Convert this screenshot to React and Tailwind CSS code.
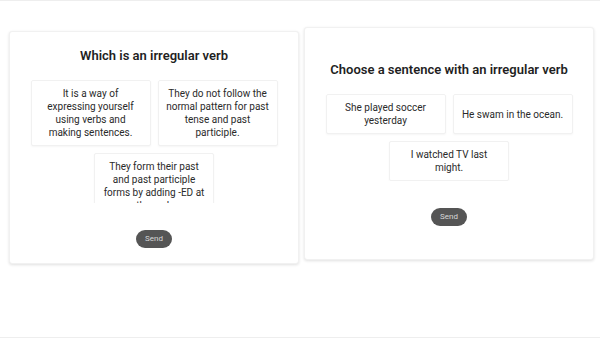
const questions = [
  {
    title: "Which is an irregular verb",
    options: [
      "It is a way of expressing yourself using verbs and making sentences.",
      "They do not follow the normal pattern for past tense and past participle.",
      "They form their past and past participle forms by adding -ED at the end.",
    ],
    offset: "mt-[4px]",
  },
  {
    title: "Choose a sentence with an irregular verb",
    options: ["She played soccer yesterday", "He swam in the ocean.", "I watched TV last might."],
    offset: "mt-0",
  },
];

function QuestionCard({ q }) {
  return (
    <div
      className={`${q.offset} w-[290px] h-[233px] shrink-0 flex flex-col items-center justify-center bg-white border border-[#f1f1f1] rounded-[3px] shadow-[0_1px_3px_rgba(0,0,0,0.12)]`}
    >
      <h2 className="text-[13px] leading-[18px] font-semibold text-[#1f1f1f] text-center">{q.title}</h2>
      <div className="mt-[15px] max-h-[123px] overflow-hidden flex flex-wrap justify-center gap-[7px] px-[20px]">
        {q.options.map((o, i) => (
          <div
            key={i}
            className="w-[120px] px-[7px] py-[6px] flex items-center justify-center text-center text-[10px] leading-[13px] text-[#2a2a2a] bg-white border border-[#f1f1f1] rounded-[2px] shadow-[0_1px_2px_rgba(0,0,0,0.04)]"
          >
            {o}
          </div>
        ))}
      </div>
      <button className="mt-[27px] w-[36px] h-[18px] rounded-full bg-[#555555] text-[8px] text-[#d8d8d8] flex items-center justify-center">
        Send
      </button>
    </div>
  );
}

export default function App() {
  return (
    <div
      className="w-[600px] h-[338px] bg-white border-t border-b border-[#eeeeee] overflow-hidden"
      style={{ fontFamily: "Roboto, 'Liberation Sans', sans-serif" }}
    >
      <div className="flex items-start gap-[5px] pl-[9px] pt-[26px]">
        {questions.map((q, i) => (
          <QuestionCard key={i} q={q} />
        ))}
      </div>
    </div>
  );
}
